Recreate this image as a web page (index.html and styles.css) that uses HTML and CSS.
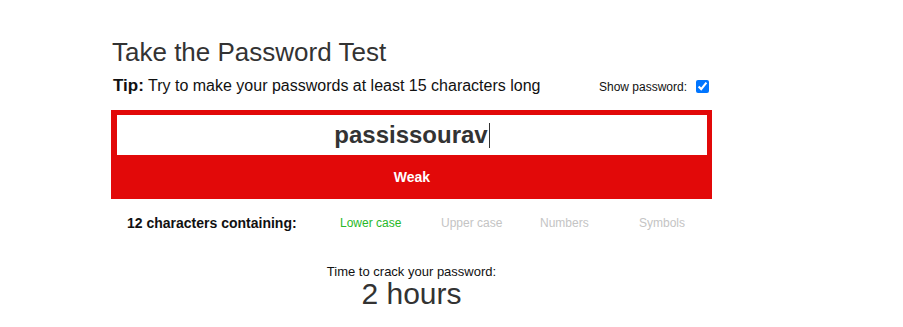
FILE: index.html
```html
<!DOCTYPE html>
<html>
<head>
<meta charset="utf-8">
<link rel="stylesheet" href="styles.css">
</head>
<body>
<div class="wrap">
  <h1 class="title">Take the Password Test</h1>
  <div class="tiprow">
    <p class="tip"><b>Tip:</b> Try to make your passwords at least 15 characters long</p>
    <label class="show">Show password: <input type="checkbox" checked></label>
  </div>
  <div class="meter">
    <div class="field">passissourav<span class="caret"></span></div>
    <div class="strength">Weak</div>
  </div>
  <div class="chars">
    <span class="count">12 characters containing:</span>
    <span class="kind on k1">Lower case</span>
    <span class="kind k2">Upper case</span>
    <span class="kind k3">Numbers</span>
    <span class="kind k4">Symbols</span>
  </div>
  <div class="crack">
    <div class="crack-label">Time to crack your password:</div>
    <div class="crack-time">2 hours</div>
  </div>
</div>
</body>
</html>
```
FILE: styles.css
```css
html, body { margin: 0; padding: 0; background: #fff; }
body { font-family: "Liberation Sans", Arial, sans-serif; color: #222; }
.wrap { margin-left: 111px; width: 601px; padding-top: 37px; }
.title { margin: 0; font-size: 26px; font-weight: normal; color: #333; line-height: 30px; padding-left: 1px; }
.tiprow { display: flex; align-items: center; justify-content: space-between; margin-top: 8px; height: 22px; }
.tip { margin: 0; font-size: 16px; color: #111; padding-left: 2px; }
.tip b { font-size: 17px; }
.show { display: flex; align-items: center; font-size: 12px; color: #111; padding-right: 3px; margin-top: 1px; }
.show input { margin: 0 0 0 9px; width: 13px; height: 13px; accent-color: #0075ff; }
.meter { margin-top: 13px; background: #e20909; padding: 5px 5px 0 6px; }
.field { height: 40px; background: #fff; display: flex; align-items: center; justify-content: center; font-size: 24px; font-weight: bold; color: #333; }
.caret { display: inline-block; width: 1px; height: 25px; background: #333; margin-left: 1px; }
.strength { height: 44px; display: flex; align-items: center; justify-content: center; color: #fff; font-weight: bold; font-size: 14px; }
.chars { display: flex; align-items: center; height: 47px; font-size: 12px; white-space: nowrap; }
.count { font-weight: bold; font-size: 14px; color: #111; width: 229px; padding-left: 16px; box-sizing: border-box; }
.kind { color: #c4c4c4; text-align: center; }
.kind.on { color: #28b828; }
.k1 { width: 61px; }
.k2 { width: 60px; margin-left: 40px; }
.k3 { width: 48px; margin-left: 39px; }
.k4 { width: 46px; margin-left: 51px; }
.crack { margin-top: 18px; text-align: center; padding-right: 0; }
.crack-label { font-size: 13px; color: #111; line-height: 15px; }
.crack-time { font-size: 30px; color: #333; line-height: 30px; }
```
